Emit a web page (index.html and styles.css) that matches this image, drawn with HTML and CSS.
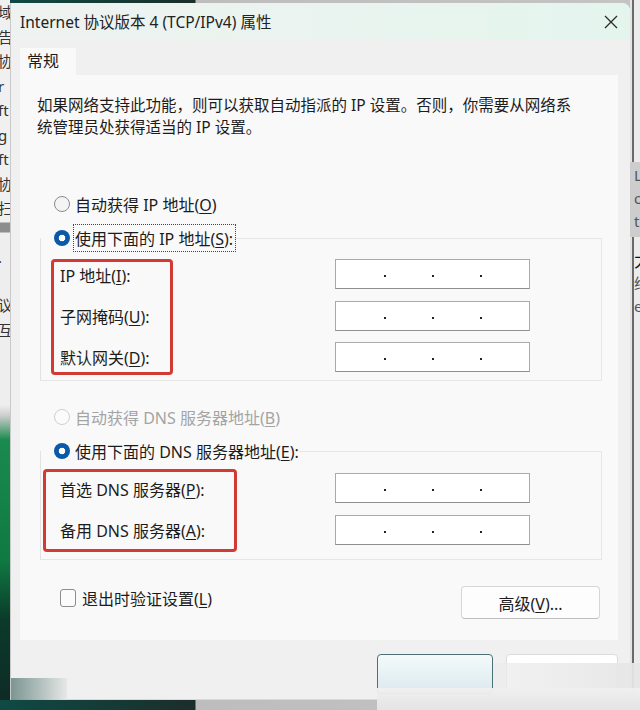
FILE: index.html
```html
<!DOCTYPE html>
<html lang="zh-CN">

<head>
    <meta charset="UTF-8">
    <meta name="viewport" content="width=device-width, initial-scale=1.0">
    <title>Internet 协议版本 4 (TCP/IPv4) 属性</title>
    <link rel="stylesheet" href="styles.css">
</head>
<body>
    <div class="desktop">
        <div class="bg-left">
            <span>域</span>
            <span>告</span>
            <span>协</span>
            <span>r</span>
            <span>ft</span>
            <span>g</span>
            <span>ft</span>
            <span>协</span>
            <span>扫</span>
            <span class="gap"></span>
            <span>.</span>
            <span class="gap"></span>
            <span>议</span>
            <span>互</span>
        </div>

        <div class="dialog">
            <div class="titlebar">
                <span class="title">Internet 协议版本 4 (TCP/IPv4) 属性</span>
                <svg class="close" width="14" height="14" viewBox="0 0 14 14">
                    <path d="M1 1 L13 13 M13 1 L1 13" stroke="#2b2b2b" stroke-width="1.3" fill="none"/>
                </svg>
            </div>

            <div class="tabs">
                <span class="tab">常规</span>
            </div>

            <div class="panel">
                <p class="intro">如果网络支持此功能，则可以获取自动指派的 IP 设置。否则，你需要从网络系<br>统管理员处获得适当的 IP 设置。</p>

                <div class="option option-first">
                    <span class="radio"></span>
                    <span>自动获得 IP 地址(<u>O</u>)</span>
                </div>

                <div class="group">
                    <div class="option legend">
                        <span class="radio checked"></span>
                        <span class="focus">使用下面的 IP 地址(<u>S</u>):</span>
                    </div>
                    <div class="group-body ip-body">
                        <div class="labels marked">
                            <span>IP 地址(<u>I</u>):</span>
                            <span>子网掩码(<u>U</u>):</span>
                            <span>默认网关(<u>D</u>):</span>
                        </div>
                        <div class="fields">
                            <div class="ip-input"><i></i><i></i><i></i></div>
                            <div class="ip-input"><i></i><i></i><i></i></div>
                            <div class="ip-input"><i></i><i></i><i></i></div>
                        </div>
                    </div>
                </div>

                <div class="option disabled">
                    <span class="radio"></span>
                    <span>自动获得 DNS 服务器地址(<u>B</u>)</span>
                </div>

                <div class="group group-dns">
                    <div class="option legend">
                        <span class="radio checked"></span>
                        <span>使用下面的 DNS 服务器地址(<u>E</u>):</span>
                    </div>
                    <div class="group-body dns-body">
                        <div class="labels marked">
                            <span>首选 DNS 服务器(<u>P</u>):</span>
                            <span>备用 DNS 服务器(<u>A</u>):</span>
                        </div>
                        <div class="fields">
                            <div class="ip-input"><i></i><i></i><i></i></div>
                            <div class="ip-input"><i></i><i></i><i></i></div>
                        </div>
                    </div>
                </div>

                <div class="bottom-row">
                    <label class="check-label">
                        <span class="checkbox"></span>
                        <span>退出时验证设置(<u>L</u>)</span>
                    </label>
                    <button type="button" class="btn-advanced">高级(<u>V</u>)...</button>
                </div>
            </div>

            <div class="footer">
                <button type="button" class="btn-ok"></button>
                <button type="button" class="btn-cancel"></button>
            </div>
        </div>

        <div class="bg-right">
            <div class="band">
                <span>L</span>
                <span>or</span>
                <span>te</span>
            </div>
            <span class="big">大</span>
            <span>络</span>
            <span>ea</span>
        </div>
    </div>

    <div class="taskbar-left"></div>
    <div class="watermark"></div>
    <div class="watermark-low"></div>
</body>

</html>
```

FILE: styles.css
```css
body {
    margin: 0;
    padding: 0;
    width: 640px;
    height: 710px;
    overflow: hidden;
    position: relative;
    font-family: "Noto Sans", "Noto Sans CJK SC", sans-serif;
    font-size: 16px;
    color: #1c1c1c;
    background: linear-gradient(to right, #0f4a44 0, #1b2e2b 195px, #bdbdbd 196px, #c4c4c4 100%);
}

u {
    text-decoration: underline;
    text-underline-offset: 2px;
}

.desktop {
    display: flex;
    height: 700px;
}

/* windows behind the dialog */
.bg-left {
    width: 10px;
    overflow: hidden;
    display: flex;
    flex-direction: column;
    font-size: 15px;
    line-height: 24.5px;
    color: #333;
    background: linear-gradient(to bottom, #f0f0f0 0, #f0f0f0 222px, #8d8d8d 223px, #8d8d8d 232px, #eeeeee 233px,
            #eeeeee 405px, #cfcfcf 415px, #1b8a4e 440px, #0f7a42 560px, #0b3a2a 620px, #0e2b26 700px);
}

.bg-left span {
    display: block;
    height: 24.5px;
    margin-left: -2px;
}

.bg-left .gap {
    height: 24px;
}

.bg-right {
    width: 10px;
    overflow: hidden;
    display: flex;
    flex-direction: column;
    padding-top: 162px;
    font-size: 15px;
    line-height: 23px;
    color: #555;
    background: linear-gradient(to right, #e4e4e4 0, #e4e4e4 2px, #6a6a6a 2px, #6a6a6a 4px, #ececec 4px);
}

.bg-right span {
    padding-left: 4px;
    white-space: nowrap;
}

.bg-right .band {
    display: flex;
    flex-direction: column;
    background-color: #cdcdcd;
    padding: 2px 0 4px;
    margin-bottom: 12px;
}

.bg-right .big {
    color: #111;
    font-size: 18px;
}

/* dialog */
.dialog {
    width: 620px;
    margin-top: 3px;
    display: flex;
    flex-direction: column;
    background-color: #f0f0f0;
    border-left: 1px solid #c9c9c9;
    border-radius: 0 8px 0 0;
}

.titlebar {
    height: 37px;
    display: flex;
    align-items: center;
    justify-content: space-between;
    padding: 0 12px 0 9px;
    background: linear-gradient(to right, #eef2f0 0, #e9f4ef 60%, #e4f5ee 100%);
    border-radius: 0 8px 0 0;
}

.title {
    font-size: 15.5px;
    color: #222;
}

.tabs {
    display: flex;
    padding: 8px 0 0 9px;
}

.tab {
    background-color: #f9f9f9;
    padding: 3px 8px 4px 7px;
    width: 41px;
    line-height: 20px;
}

.panel {
    background-color: #f9f9f9;
    margin: 0 12px 0 9px;
    padding: 19px 0 21px;
    display: flex;
    flex-direction: column;
}

.intro {
    margin: 0 0 0 17px;
    font-size: 15.5px;
    line-height: 22px;
}

.option {
    display: flex;
    align-items: center;
    gap: 5px;
    height: 24px;
    padding-left: 34px;
}

.option-first {
    margin-top: 54px;
}

.radio {
    width: 14px;
    height: 14px;
    border: 1px solid #8b8b8b;
    border-radius: 50%;
    background-color: #f4f4f4;
    flex-shrink: 0;
}

.radio.checked {
    width: 16px;
    height: 16px;
    border: none;
    background: radial-gradient(circle, #ffffff 0, #ffffff 3px, #0a5aa8 3.6px);
}

.focus {
    outline: 1px dotted #444;
    outline-offset: 1px;
    padding-right: 1px;
}

.disabled {
    color: #a4a4a4;
    margin-top: 24px;
}

.disabled .radio {
    border-color: #cfcfcf;
    background-color: #fbfbfb;
}

.group {
    margin: 22px 16px 0 20px;
    border: 1px solid #e6e6e6;
    border-left-color: #e2e2e2;
}

.group .legend {
    margin-top: -13px;
    padding-left: 13px;
    width: fit-content;
    background-color: #f9f9f9;
}

.group-body {
    display: flex;
    align-items: flex-start;
    padding-right: 71px;
}

.ip-body {
    padding: 9px 71px 5px 10px;
}

.dns-body {
    padding: 6px 71px 7px 2px;
}

.labels {
    display: flex;
    flex-direction: column;
    border: 3px solid #d23a34;
    border-radius: 4px;
}

.ip-body .labels {
    width: 110px;
    padding: 0 0 0 6px;
    row-gap: 13px;
}

.ip-body .labels span {
    height: 28px;
    line-height: 28px;
}

.dns-body .labels {
    width: 174px;
    padding: 0 0 0 14px;
    row-gap: 5px;
}

.dns-body .labels span {
    height: 36px;
    line-height: 36px;
}

.fields {
    margin-left: auto;
    display: flex;
    flex-direction: column;
    row-gap: 11.5px;
}

.dns-body .fields {
    margin-top: 4px;
    row-gap: 12px;
}

.ip-input {
    width: 193px;
    height: 24px;
    padding-top: 4px;
    border: 1px solid #a9a9a9;
    border-bottom-color: #8f8f8f;
    background-color: #ffffff;
    display: flex;
    align-items: center;
    justify-content: center;
    gap: 46px;
}

.ip-input i {
    width: 2px;
    height: 2px;
    background-color: #222;
}

.bottom-row {
    display: flex;
    align-items: flex-start;
    justify-content: space-between;
    margin-top: 26px;
    padding: 0 18px 0 40px;
}

.check-label {
    display: flex;
    align-items: center;
    gap: 6px;
    height: 24px;
}

.checkbox {
    width: 14px;
    height: 16px;
    border: 1px solid #8d8d8d;
    border-radius: 3px;
    background-color: #fbfbfb;
}

.btn-advanced {
    width: 139px;
    height: 33px;
    font-family: inherit;
    font-size: 16px;
    color: #1c1c1c;
    background-color: #fdfdfd;
    border: 1px solid #d6d6d6;
    border-bottom-color: #bdbdbd;
    border-radius: 4px;
    padding: 0;
}

.footer {
    display: flex;
    justify-content: flex-end;
    gap: 13px;
    padding: 14px 12px 0 0;
    flex: 1;
    border-bottom: 1px solid #d8d8d8;
}

.btn-ok {
    width: 116px;
    height: 40px;
    border: 1px solid #4f6f76;
    border-radius: 4px;
    background: linear-gradient(to bottom, #f3fafb 0, #dbe9ee 100%);
}

.btn-cancel {
    width: 112px;
    height: 40px;
    border: 1px solid #dcdcdc;
    border-radius: 4px;
    background-color: #ffffff;
}

/* blurred watermark lying over the bottom of the picture */
.taskbar-left {
    position: absolute;
    left: 11px;
    top: 678px;
    width: 56px;
    height: 22px;
    background: linear-gradient(to right, #5f7f7b 0, #9fb1ae 50%, #e4e6e5 100%);
    opacity: 0.8;
}

.watermark {
    position: absolute;
    left: 493px;
    top: 663px;
    width: 147px;
    height: 47px;
    background: linear-gradient(to right, rgba(236, 236, 236, 0.7) 0, rgba(230, 230, 230, 0.95) 100%);
}

.watermark-low {
    position: absolute;
    left: 377px;
    top: 688px;
    width: 263px;
    height: 22px;
    background: linear-gradient(to bottom, rgba(240, 240, 240, 0.95) 0, rgba(228, 228, 228, 1) 100%);
}
```
